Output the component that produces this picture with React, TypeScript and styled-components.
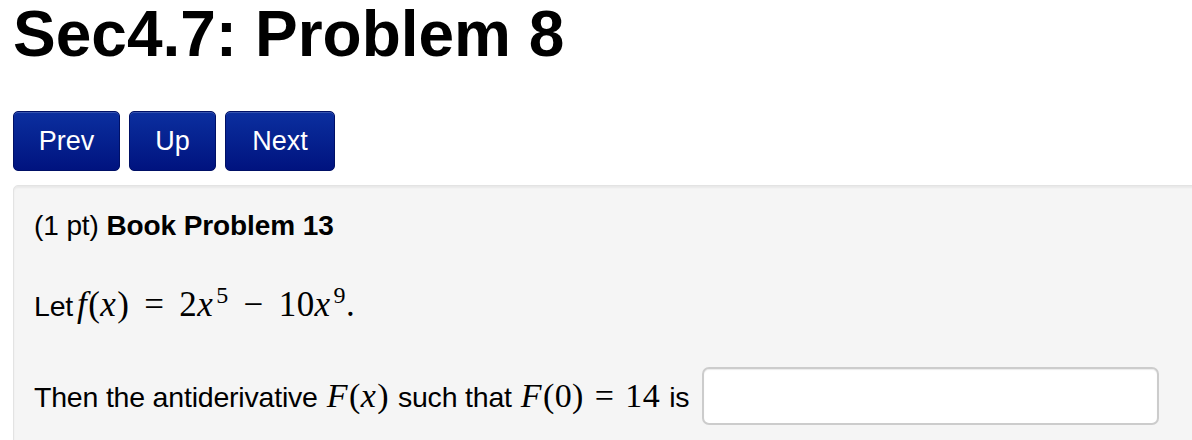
import React from "react"
import styled, { createGlobalStyle } from "styled-components"

const GlobalStyle = createGlobalStyle`
  html, body {
    margin: 0;
    padding: 0;
    background: #fff;
    overflow: hidden;
  }
  body {
    font-family: "Liberation Sans", Arial, Helvetica, sans-serif;
    color: #000;
  }
`

/**
 * Page wrapper
 */
const Page = styled.div`
  padding: 0 0 0 13px;
  width: 1220px;
`

const Title = styled.h1`
  margin: 0;
  padding-top: 4px;
  font-size: 64px;
  line-height: 60px;
  font-weight: bold;
  letter-spacing: 0;
`

/**
 * Prev / Up / Next navigation
 */
const NavBar = styled.nav`
  display: flex;
  gap: 9px;
  margin-top: 47px;
`

const NavButton = styled.a`
  display: flex;
  align-items: center;
  justify-content: center;
  box-sizing: border-box;
  height: 60px;
  width: ${(p: { w: number }) => p.w}px;
  border: 1px solid #001066;
  border-radius: 5px;
  background: linear-gradient(#0b2f9f, #00137f);
  box-shadow: inset 0 1px 0 rgba(255, 255, 255, 0.18);
  color: #fff;
  font-size: 27px;
  text-decoration: none;
  cursor: pointer;
`

/**
 * Problem panel
 */
const Panel = styled.section`
  margin-top: 14px;
  box-sizing: border-box;
  min-height: 300px;
  padding: 20px 0 0 20px;
  background: #f5f5f5;
  border: 1px solid #e3e3e3;
  border-radius: 5px;
  box-shadow: inset 0 2px 2px rgba(0, 0, 0, 0.05);
`

const ProblemHeader = styled.div`
  font-size: 28px;
  line-height: 40px;
  letter-spacing: -0.1px;
  b {
    font-weight: bold;
  }
`

const Line = styled.div`
  margin-top: 39px;
  font-size: 28.5px;
  line-height: 40px;
  letter-spacing: -0.2px;
`

const AnswerRow = styled.div`
  display: flex;
  align-items: center;
  margin-top: 41px;
  font-size: 28.5px;
  line-height: 40px;
  letter-spacing: -0.2px;
`

type MathProps = { gap?: number; size?: number; op?: number }

const Math = styled.span<MathProps>`
  font-family: "Liberation Serif", "Times New Roman", serif;
  font-size: ${(p) => p.size ?? 34}px;
  letter-spacing: 0.4px;
  margin: 0 ${(p) => p.gap ?? 9}px;
  white-space: nowrap;
  i {
    font-style: italic;
    margin-right: 1px;
  }
  sup {
    font-size: 24px;
    line-height: 0;
    vertical-align: 13px;
    margin-left: 2px;
  }
  .op {
    margin: 0 ${(p) => p.op ?? 11}px;
  }
`

const AnswerInput = styled.input`
  box-sizing: border-box;
  width: 457px;
  height: 58px;
  margin-left: 13px;
  border: 2px solid #cccccc;
  border-radius: 7px;
  background: #fff;
  box-shadow: inset 0 1px 1px rgba(0, 0, 0, 0.08);
  font-size: 24px;
  outline: none;
`

export default function App() {
  return (
    <>
      <GlobalStyle />
      <Page>
        <Title>Sec4.7: Problem 8</Title>
        <NavBar>
          <NavButton w={107}>Prev</NavButton>
          <NavButton w={87}>Up</NavButton>
          <NavButton w={110}>Next</NavButton>
        </NavBar>
        <Panel>
          <ProblemHeader>
            (1 pt) <b>Book Problem 13</b>
          </ProblemHeader>
          <Line>
            Let
            <Math gap={4} size={35} op={15}>
              <i>f</i>(<i>x</i>)<span className="op">=</span>2<i>x</i>
              <sup>5</sup>
              <span className="op">−</span>10<i>x</i>
              <sup>9</sup>.
            </Math>
          </Line>
          <AnswerRow>
            <span>
              Then the antiderivative
              <Math>
                <i>F</i>(<i>x</i>)
              </Math>
              such that
              <Math>
                <i>F</i>(0)<span className="op">=</span>14
              </Math>
              is
            </span>
            <AnswerInput type="text" />
          </AnswerRow>
        </Panel>
      </Page>
    </>
  )
}
